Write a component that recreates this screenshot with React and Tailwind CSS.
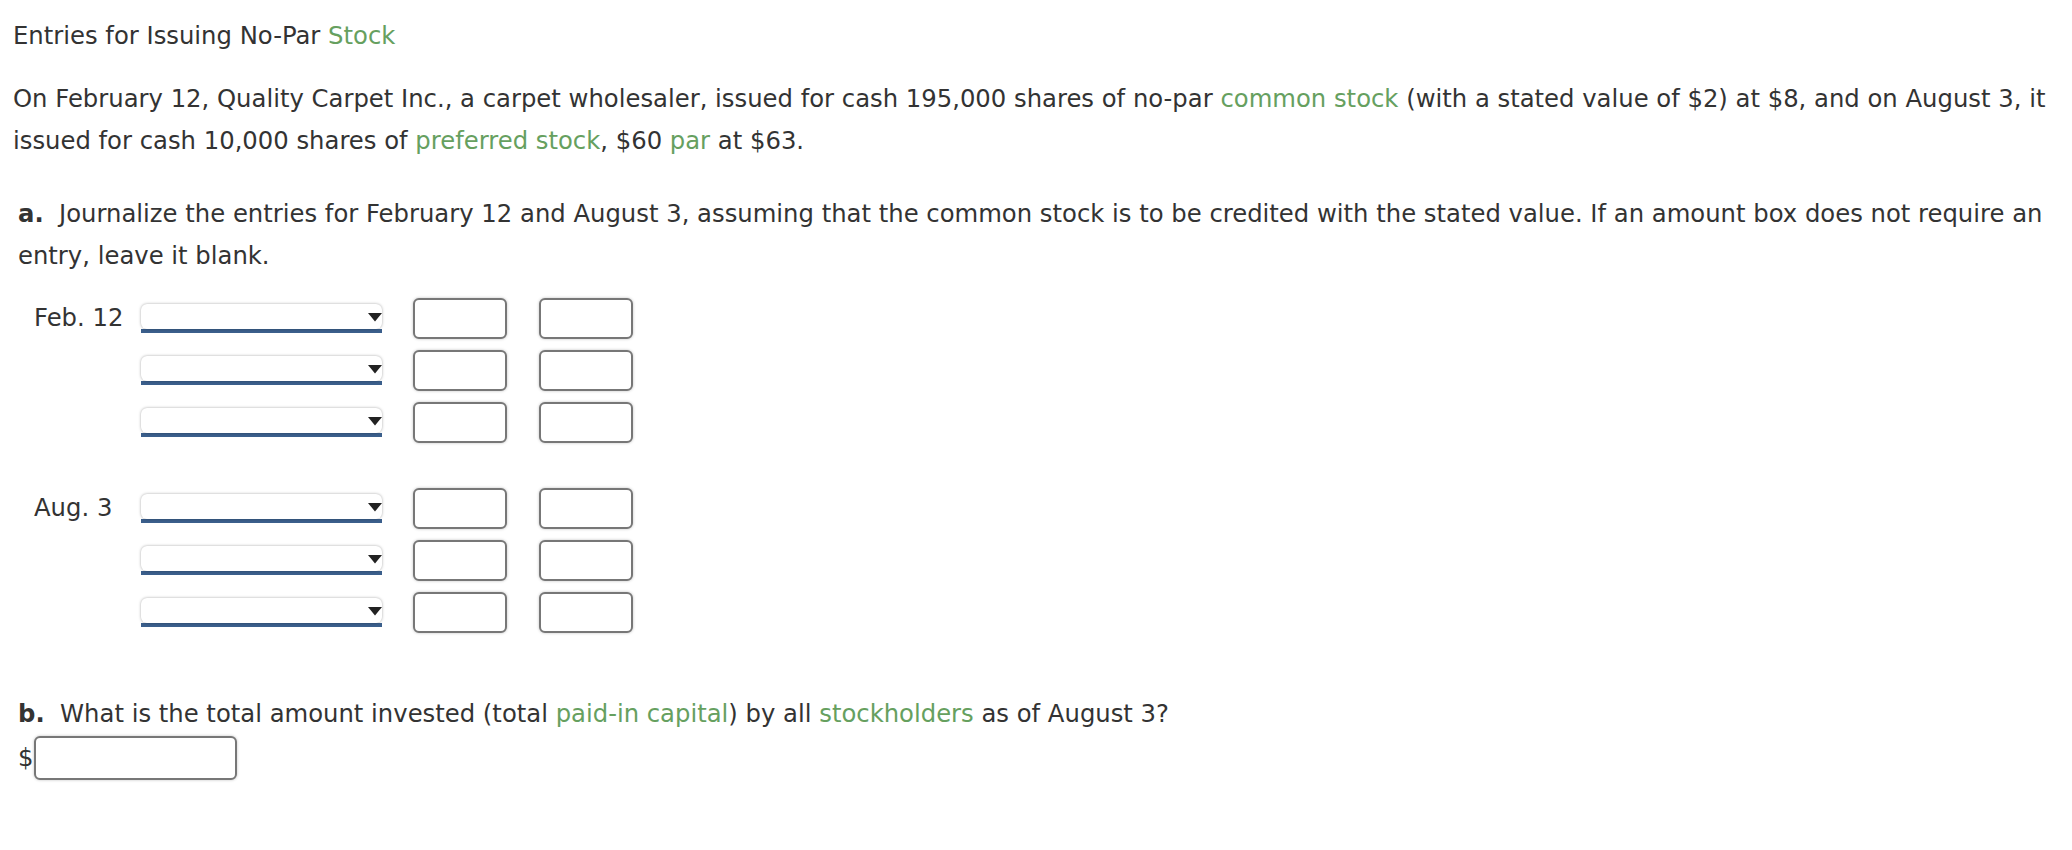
import React from 'react'

const green = 'text-[#66a05f]'

function Select() {
  return (
    <div className="w-[241px]">
      <div className="relative h-[25px] rounded-[6px] bg-white shadow-[0_0_3px_rgba(0,0,0,0.35)]">
        <svg className="absolute right-[0px] top-[9px]" width="14" height="9" viewBox="0 0 14 9">
          <path d="M0 0 H14 L7 8.5 Z" fill="#222" />
        </svg>
      </div>
      <div className="h-[4px] bg-[#3b5f8c]" />
    </div>
  )
}

function Amount() {
  return <div className="h-[41px] w-[94px] rounded-[6px] border-2 border-[#777] bg-white shadow-[0_0_3px_rgba(0,0,0,0.25)]" />
}

function Entry({ label }) {
  return (
    <div className="flex flex-col gap-[11px]">
      {[0, 1, 2].map((i) => (
        <div key={i} className="flex items-center">
          <div className="w-[128px] pl-[21px]">{i === 0 ? label : ''}</div>
          <Select />
          <div className="ml-[31px]">
            <Amount />
          </div>
          <div className="ml-[32px]">
            <Amount />
          </div>
        </div>
      ))}
    </div>
  )
}

export default function App() {
  return (
    <div className="min-h-[850px] bg-white px-[13px] pt-[15px] font-['DejaVu_Sans',Verdana,sans-serif] text-[24.3px] leading-[42px] text-[#333]">
      <div>
        Entries for Issuing No-Par <span className={green}>Stock</span>
      </div>

      <p className="mt-[21px]">
        On February 12, Quality Carpet Inc., a carpet wholesaler, issued for cash 195,000 shares of no-par{' '}
        <span className={green}>common stock</span> (with a stated value of $2) at $8, and on August 3, it issued for cash
        10,000 shares of <span className={green}>preferred stock</span>, $60 <span className={green}>par</span> at $63.
      </p>

      <p className="mt-[31px] pl-[5px]">
        <b>a.</b>&nbsp; Journalize the entries for February 12 and August 3, assuming that the common stock is to be
        credited with the stated value. If an amount box does not require an entry, leave it blank.
      </p>

      <div className="mt-[20px]">
        <Entry label="Feb. 12" />
      </div>
      <div className="mt-[44px]">
        <Entry label="Aug. 3" />
      </div>

      <p className="mt-[60px] pl-[5px]">
        <b>b.</b>&nbsp; What is the total amount invested (total <span className={green}>paid-in capital</span>) by all{' '}
        <span className={green}>stockholders</span> as of August 3?
      </p>
      <div className="mt-[1px] flex items-center pl-[5px]">
        <span>$</span>
        <div className="ml-[1px] h-[44px] w-[203px] rounded-[6px] border-2 border-[#777] bg-white shadow-[0_0_3px_rgba(0,0,0,0.25)]" />
      </div>
    </div>
  )
}
